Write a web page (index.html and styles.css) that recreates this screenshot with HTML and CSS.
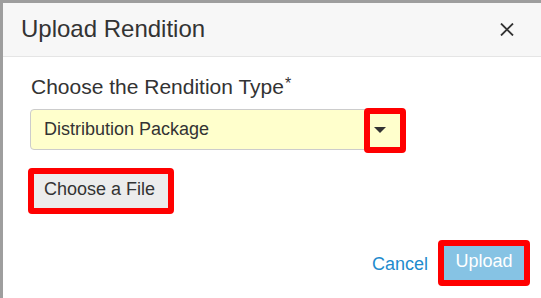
FILE: index.html
```html
<!DOCTYPE html>
<html lang="en">
<head>
    <meta charset="UTF-8">
    <title>Upload Rendition</title>
    <link rel="stylesheet" href="styles.css">
</head>
<body>
    <div class="modal">
        <header class="modal-header">
            <h4 class="modal-title">Upload Rendition</h4>
            <button class="close" aria-label="Close">
                <svg width="14" height="13" viewBox="0 0 14 13">
                    <path d="M1 0.5 L13 12.5 M13 0.5 L1 12.5" stroke="#333" stroke-width="1.8" fill="none"/>
                </svg>
            </button>
        </header>

        <div class="modal-body">
            <label class="field-label">Choose the Rendition Type<span class="req">*</span></label>
            <div class="select-box">
                <span class="select-value">Distribution Package</span>
                <span class="select-arrow"></span>
                <!-- highlight drawn on top of the screenshot -->
                <span class="highlight arrow-highlight"></span>
            </div>

            <div class="file-row">
                <span class="highlight-wrap">
                    <button class="btn-file">Choose a File</button>
                </span>
            </div>
        </div>

        <footer class="modal-footer">
            <a class="btn-link" href="#">Cancel</a>
            <span class="highlight-wrap">
                <button class="btn-upload">Upload</button>
            </span>
        </footer>
    </div>
</body>
</html>
```

FILE: styles.css
```css
* {
    margin: 0;
    padding: 0;
    box-sizing: border-box;
}

body {
    width: 541px;
    height: 298px;
    overflow: hidden;
    background-color: #9e9e9e;
    font-family: "Liberation Sans", Arial, sans-serif;
    color: #333;
}

.modal {
    margin: 3px 0 0 3px;
    height: 295px;
    background-color: #fff;
}

.modal-header {
    height: 54px;
    padding: 0 27px 2px 18px;
    display: flex;
    justify-content: space-between;
    align-items: center;
    background-color: #f7f7f7;
    border-bottom: 1px solid #e5e5e5;
}
.modal-title {
    font-size: 24px;
    font-weight: normal;
    color: #333;
}
.close {
    border: none;
    background: none;
    display: flex;
    margin-top: 2px;
}

.modal-body {
    padding: 18px 0 0 27px;
}
.field-label {
    display: block;
    font-size: 21px;
    line-height: 23px;
    padding-left: 1px;
}
.req {
    font-size: 16px;
    vertical-align: top;
    position: relative;
    top: -3px;
    margin-left: 1px;
}

.select-box {
    position: relative;
    margin-top: 11px;
    width: 374px;
    height: 41px;
    display: flex;
    align-items: center;
    background-color: #ffffcc;
    border: 1px solid #ccc;
    border-radius: 4px;
}
.select-value {
    flex-grow: 1;
    padding-left: 13px;
    font-size: 18px;
}
.select-arrow {
    width: 0;
    height: 0;
    margin-right: 17px;
    border-left: 6px solid transparent;
    border-right: 6px solid transparent;
    border-top: 6px solid #333;
}

.highlight {
    position: absolute;
    border: 6px solid #ff0000;
    border-radius: 4px;
}
.arrow-highlight {
    left: 333px;
    top: -2px;
    width: 42px;
    height: 45px;
}
.highlight-wrap {
    display: inline-flex;
    border: 6px solid #ff0000;
    border-radius: 4px;
}

.file-row {
    margin: 18px 0 0 -2px;
}
.btn-file {
    width: 134px;
    height: 34px;
    padding: 0 0 3px 10px;
    display: flex;
    align-items: center;
    border: none;
    background-color: #ececec;
    font-family: inherit;
    font-size: 18px;
    color: #333;
}

.modal-footer {
    margin-top: 26px;
    padding-right: 11px;
    display: flex;
    justify-content: flex-end;
    align-items: center;
    gap: 10px;
}
.btn-link {
    font-size: 18px;
    color: #1e8bcd;
    text-decoration: none;
    margin-top: 2px;
}
.btn-upload {
    width: 80px;
    height: 34px;
    padding-bottom: 3px;
    border: none;
    background-color: #86c3e4;
    color: #fff;
    font-family: inherit;
    font-size: 18px;
}
```
